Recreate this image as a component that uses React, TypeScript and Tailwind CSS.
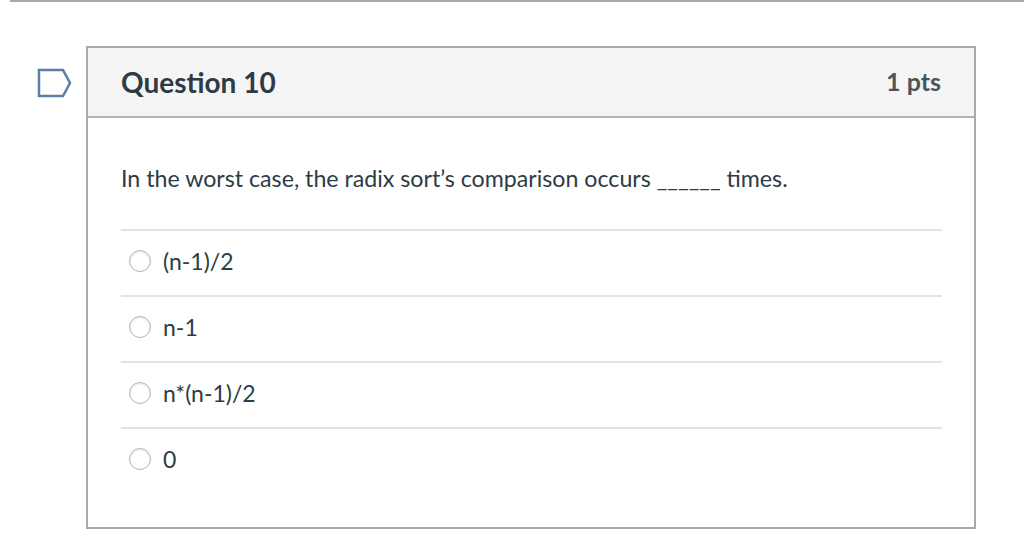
import React from 'react';

const OPTIONS = ['(n-1)/2', 'n-1', 'n*(n-1)/2', '0'];

function FlagIcon() {
  return (
    <svg width="36" height="32" viewBox="0 0 36 32" fill="none">
      <path d="M2 3 H26 L33 16 L26 29 H2 Z" stroke="#5b7fa3" strokeWidth="2.5" strokeLinejoin="miter" />
    </svg>
  );
}

function App() {
  return (
    <div className="min-h-screen bg-white text-[#2d3b45]" style={{ fontFamily: 'Lato, "Open Sans", sans-serif' }}>
      {/* top rule */}
      <div className="ml-[10px] h-[2px] bg-[#a9a9a9]" />

      <div className="flex mt-[44px]">
        {/* flag column */}
        <div className="w-[86px] shrink-0 pt-[21px] pl-[37px]">
          <FlagIcon />
        </div>

        {/* question card */}
        <div className="w-[890px] border-2 border-[#a9a9a9]">
          <div className="h-[70px] bg-[#f5f5f5] border-b-2 border-[#b3b3b3] flex items-center justify-between pl-[33px] pr-[33px]">
            <h2 className="text-[28px] font-bold text-[#2d3b45]">Question 10</h2>
            <span className="text-[25px] font-bold text-[#4a5560]">1 pts</span>
          </div>

          <div className="pl-[33px] pr-[32px] pt-[45px] pb-[34px]">
            <p className="text-[23.2px] leading-[30px]">
              In the worst case, the radix sort’s comparison occurs ______ times.
            </p>

            <div className="mt-[36px]">
              {OPTIONS.map((opt) => (
                <div key={opt} className="border-t-2 border-[#e3e3e3] h-[66px] flex items-center pl-[8px] pb-[4px]">
                  <span className="w-[22px] h-[22px] rounded-full border border-[#b5b5b5] bg-white shadow-[inset_0_1px_2px_rgba(0,0,0,0.12)]" />
                  <span className="ml-[12px] text-[23px] text-[#2d3b45]">{opt}</span>
                </div>
              ))}
            </div>
          </div>
        </div>
      </div>
    </div>
  );
}

export default App;
